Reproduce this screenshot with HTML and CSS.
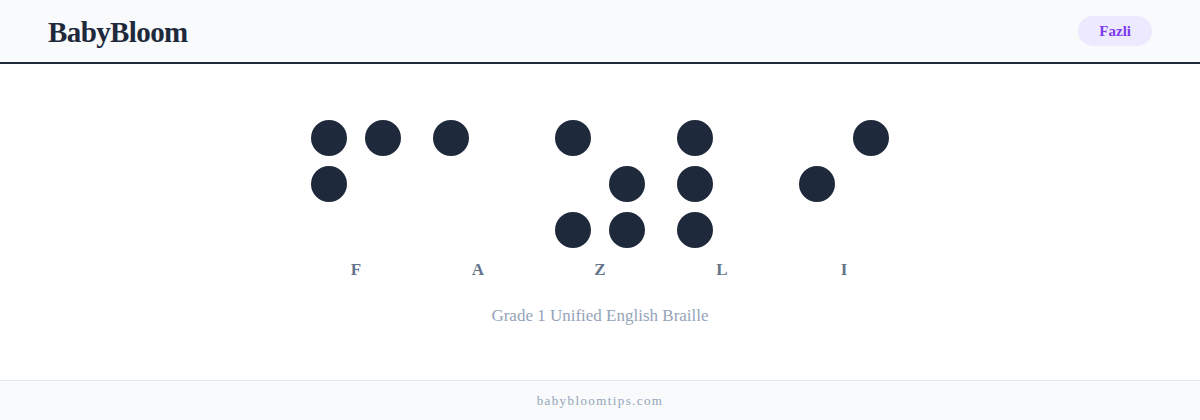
FILE: index.html
```html
<!DOCTYPE html>
<html lang="en">
<head>
<meta charset="utf-8">
<title>BabyBloom – Fazli in Braille</title>
<link rel="stylesheet" href="styles.css">
</head>
<body>
<header class="top">
  <div class="logo">BabyBloom</div>
  <div class="badge">Fazli</div>
</header>
<main class="main">
  <div class="cells">
    <div class="cell">
      <span class="dot on"></span><span class="dot on"></span>
      <span class="dot on"></span><span class="dot"></span>
      <span class="dot"></span><span class="dot"></span>
    </div>
    <div class="cell">
      <span class="dot on"></span><span class="dot"></span>
      <span class="dot"></span><span class="dot"></span>
      <span class="dot"></span><span class="dot"></span>
    </div>
    <div class="cell">
      <span class="dot on"></span><span class="dot"></span>
      <span class="dot"></span><span class="dot on"></span>
      <span class="dot on"></span><span class="dot on"></span>
    </div>
    <div class="cell">
      <span class="dot on"></span><span class="dot"></span>
      <span class="dot on"></span><span class="dot"></span>
      <span class="dot on"></span><span class="dot"></span>
    </div>
    <div class="cell">
      <span class="dot"></span><span class="dot on"></span>
      <span class="dot on"></span><span class="dot"></span>
      <span class="dot"></span><span class="dot"></span>
    </div>
  </div>
  <div class="labels">
    <span class="label">F</span>
    <span class="label">A</span>
    <span class="label">Z</span>
    <span class="label">L</span>
    <span class="label">I</span>
  </div>
  <p class="caption">Grade 1 Unified English Braille</p>
</main>
<footer class="foot">babybloomtips.com</footer>
</body>
</html>
```

FILE: styles.css
```css
* { box-sizing: border-box; }
html, body { margin: 0; padding: 0; }
body {
  width: 1200px;
  height: 420px;
  display: flex;
  flex-direction: column;
  background: #ffffff;
  font-family: "Liberation Serif", "DejaVu Serif", serif;
  color: #1e293b;
}
.top {
  height: 64px;
  flex: none;
  display: flex;
  align-items: center;
  justify-content: space-between;
  padding: 0 48px;
  background: #f8fafc;
  border-bottom: 2px solid #1e293b;
}
.logo {
  font-family: "Liberation Serif", serif;
  font-weight: 700;
  font-size: 29px;
  color: #1e293b;
  letter-spacing: -0.6px;
  margin-top: 2px;
}
.badge {
  height: 30px;
  padding: 0 21px;
  border-radius: 15px;
  background: #ede9fe;
  color: #7c3aed;
  font-weight: 700;
  font-size: 15px;
  display: flex;
  align-items: center;
}
.main {
  flex: 1;
  display: flex;
  flex-direction: column;
  align-items: center;
  padding-top: 56px;
}
.cells {
  display: flex;
  gap: 32px;
}
.cell {
  display: grid;
  grid-template-columns: 36px 36px;
  grid-auto-rows: 36px;
  column-gap: 18px;
  row-gap: 10px;
}
.dot {
  width: 36px;
  height: 36px;
  border-radius: 50%;
}
.dot.on { background: #1e293b; }
.labels {
  display: flex;
  gap: 32px;
  margin-top: 11px;
}
.label {
  width: 90px;
  text-align: center;
  font-size: 17px;
  font-weight: 700;
  color: #64748b;
  line-height: 22px;
}
.caption {
  margin: 25px 0 0;
  font-size: 17px;
  line-height: 20px;
  color: #94a3b8;
}
.foot {
  height: 40px;
  flex: none;
  border-top: 1px solid #e2e8f0;
  background: #f8fafc;
  display: flex;
  align-items: center;
  justify-content: center;
  font-size: 13px;
  letter-spacing: 1.4px;
  color: #94a3b8;
}
```
